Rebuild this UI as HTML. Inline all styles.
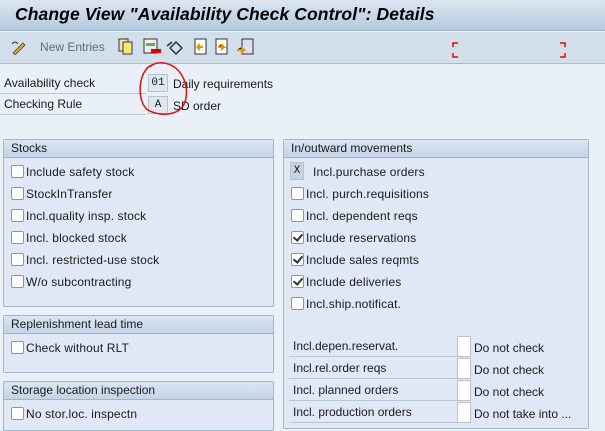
<!DOCTYPE html>
<html><head><meta charset="utf-8"><style>
*{margin:0;padding:0;box-sizing:border-box}
body{width:605px;height:419px;overflow:hidden;background:#e9f0f7;font-family:"Liberation Sans",sans-serif;font-size:12px;color:#1a1a1a;position:relative}
.a{position:absolute;white-space:nowrap}
#title{left:0;top:0;width:605px;height:31px;background:linear-gradient(#dce6f1,#b4c9de);border-bottom:1px solid #9fb4cb}
#title span{position:absolute;left:15px;top:4px;font-size:17.5px;letter-spacing:0.1px;font-weight:bold;font-style:italic;color:#000}
#tb{left:0;top:32px;width:605px;height:32px;background:#d2dee9;border-bottom:1px solid #a9bccf}
.lbl{border-bottom:1px solid #b9c6d3;height:19px;line-height:17px;padding-left:4px}
.fld{background:#dfe6ee;border:1px solid #b8c2cc;height:18px;line-height:16px;text-align:center;font-size:11px;font-family:"Liberation Mono",monospace}
.panel{border:1px solid #9fb5cc;background:#dfe8f4;border-radius:2px}
.ph{height:18px;background:linear-gradient(#dbe6f2,#c3d5e8);border-bottom:1px solid #9fb5cc;line-height:17px;padding-left:7px}
.cb{width:13px;height:13px;border:1px solid #8d959d;background:#fff;border-radius:2px;display:inline-block;vertical-align:-2px;margin-right:2px;position:relative}
.row{position:absolute;left:7px;white-space:nowrap;letter-spacing:0.15px}
.ck::after{content:"";position:absolute;left:3px;top:0px;width:4px;height:7px;border:solid #333;border-width:0 2px 2px 0;transform:rotate(40deg)}
.wf{width:14px;height:21px;background:#fff;border:1px solid #b8c2cc;position:absolute}
</style></head><body>
<div class="a" id="title"><span>Change View "Availability Check Control": Details</span></div>
<div class="a" id="tb">
<svg class="a" style="left:10px;top:7px" width="18" height="16"><path d="M3 14 L13 4 L15 6 L5 16 Z" fill="#e8a33c" stroke="#444" stroke-width=".8"/><path d="M2 5 q3-4 6 0" stroke="#333" fill="none"/></svg>
<span class="a" style="left:40px;top:8px;color:#5b6c80">New Entries</span>
<svg class="a" style="left:118px;top:6px" width="150" height="18">
<rect x="1" y="1" width="9" height="12" fill="#f3e6a0" stroke="#333"/><rect x="5" y="4" width="9" height="12" fill="#ffe95a" stroke="#2233aa"/>
<rect x="26" y="1" width="13" height="14" fill="#eee" stroke="#333"/><rect x="28" y="5" width="9" height="3" fill="#6a6"/><rect x="33" y="11" width="10" height="4" fill="#d00"/>
<path d="M52 10 l6-6 l6 6 l-6 6 z M49 8 l5-4" stroke="#235" fill="none" stroke-width="1.5"/>
<rect x="77" y="1" width="11" height="15" fill="#fff" stroke="#333"/><path d="M79 9 h6 M79 9 l3-3 M79 9 l3 3" stroke="#d90" stroke-width="2"/>
<rect x="98" y="1" width="11" height="15" fill="#fff" stroke="#333"/><path d="M100 9 h6 l-3-3 M106 9 l-3 3" stroke="#d90" stroke-width="2"/>
<rect x="124" y="1" width="11" height="15" fill="#dde" stroke="#333"/><path d="M119 12 h7 l-3-3 M126 12 l-3 3" stroke="#d90" stroke-width="2"/>
</svg>
<svg class="a" style="left:452px;top:10px" width="114" height="16"><path d="M1 5V1h5 M108 1h5v4 M1 11v4h5 M113 11v4h-5" stroke="#e00" stroke-width="1.5" fill="none"/></svg>
</div>

<div class="a lbl" style="left:0;top:75px;width:146px">Availability check</div>
<div class="a fld" style="left:148px;top:74px;width:20px">01</div>
<span class="a" style="left:173px;top:77px">Daily requirements</span>
<div class="a lbl" style="left:0;top:96px;width:146px">Checking Rule</div>
<div class="a fld" style="left:148px;top:96px;width:20px">A</div>
<span class="a" style="left:173px;top:99px">SD order</span>
<svg class="a" style="left:130px;top:58px" width="65" height="62"><path d="M22 7 C8 12 6 44 18 52 C30 59 50 58 55 44 C60 28 52 8 34 5 C28 4 22 6 20 9" stroke="#e01010" stroke-width="1.5" fill="none"/></svg>

<div class="a panel" style="left:3px;top:139px;width:271px;height:168px"><div class="ph">Stocks</div>
<div class="row" style="top:25px"><span class="cb"></span>Include safety stock</div>
<div class="row" style="top:47px"><span class="cb"></span>StockInTransfer</div>
<div class="row" style="top:69px"><span class="cb"></span>Incl.quality insp. stock</div>
<div class="row" style="top:91px"><span class="cb"></span>Incl. blocked stock</div>
<div class="row" style="top:113px"><span class="cb"></span>Incl. restricted-use stock</div>
<div class="row" style="top:135px"><span class="cb"></span>W/o subcontracting</div>
</div>
<div class="a panel" style="left:3px;top:315px;width:271px;height:58px"><div class="ph">Replenishment lead time</div>
<div class="row" style="top:25px"><span class="cb"></span>Check without RLT</div></div>
<div class="a panel" style="left:3px;top:381px;width:271px;height:50px"><div class="ph">Storage location inspection</div>
<div class="row" style="top:25px"><span class="cb"></span>No stor.loc. inspectn</div></div>

<div class="a panel" style="left:283px;top:139px;width:306px;height:290px"><div class="ph">In/outward movements</div>
<div class="a fld" style="left:6px;top:22px;width:14px;height:18px;background:#c8d2de">X</div>
<span class="a" style="left:29px;top:25px;letter-spacing:0.15px">Incl.purchase orders</span>
<div class="row" style="top:47px"><span class="cb"></span>Incl. purch.requisitions</div>
<div class="row" style="top:69px"><span class="cb"></span>Incl. dependent reqs</div>
<div class="row" style="top:91px"><span class="cb ck"></span>Include reservations</div>
<div class="row" style="top:113px"><span class="cb ck"></span>Include sales reqmts</div>
<div class="row" style="top:135px"><span class="cb ck"></span>Include deliveries</div>
<div class="row" style="top:157px"><span class="cb"></span>Incl.ship.notificat.</div>
<div class="a lbl" style="left:5px;top:198px;width:168px">Incl.depen.reservat.</div><div class="wf" style="left:173px;top:196px"></div><span class="a" style="left:190px;top:201px">Do not check</span>
<div class="a lbl" style="left:5px;top:220px;width:168px">Incl.rel.order reqs</div><div class="wf" style="left:173px;top:218px"></div><span class="a" style="left:190px;top:223px">Do not check</span>
<div class="a lbl" style="left:5px;top:242px;width:168px">Incl. planned orders</div><div class="wf" style="left:173px;top:240px"></div><span class="a" style="left:190px;top:245px">Do not check</span>
<div class="a lbl" style="left:5px;top:264px;width:168px">Incl. production orders</div><div class="wf" style="left:173px;top:262px"></div><span class="a" style="left:190px;top:267px">Do not take into ...</span>
</div>
</body></html>
